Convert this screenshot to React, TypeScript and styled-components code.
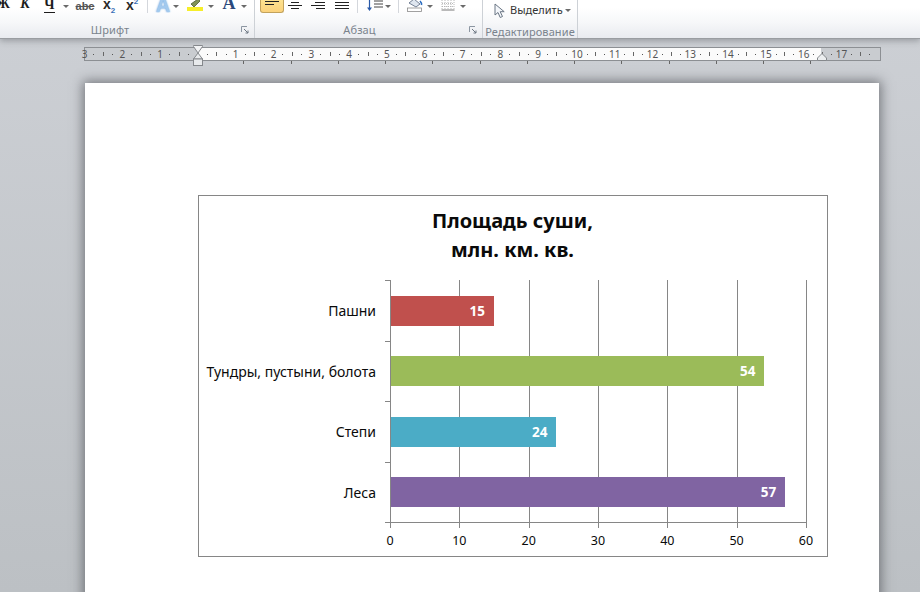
import React from "react";
import styled, { createGlobalStyle } from "styled-components";

const GlobalStyle = createGlobalStyle`
  html, body {
    margin: 0;
    padding: 0;
    height: 100%;
    overflow: hidden;
  }
  body {
    font-family: "Noto Sans", "Liberation Sans", sans-serif;
  }
`;

const landData = [
  { label: "Пашни", value: 15, color: "#c0504d" },
  { label: "Тундры, пустыни, болота", value: 54, color: "#9bbb59" },
  { label: "Степи", value: 24, color: "#4bacc6" },
  { label: "Леса", value: 57, color: "#8064a2" },
];

const rulerNumbers = [3, 2, 1, 0, 1, 2, 3, 4, 5, 6, 7, 8, 9, 10, 11, 12, 13, 14, 15, 16, 17];
const tabStops = Array.from({ length: 13 }, (_, i) => i);
const axisValues = [0, 10, 20, 30, 40, 50, 60];

function App() {
  return (
    <Window>
      <GlobalStyle />

      {/* ribbon, cut off at the top */}
      <Ribbon>
        <FontGroup>
          <Controls>
            <Tool $w={22}><BoldLetter>Ж</BoldLetter></Tool>
            <Tool $w={22}><ItalicLetter>К</ItalicLetter></Tool>
            <Tool $w={27}><UnderLetter>Ч</UnderLetter></Tool>
            <Tool $w={6}><Caret /></Tool>
            <Tool $w={32}><StrikeText>abc</StrikeText></Tool>
            <Tool $w={16}><ScriptLetter>x<sub>2</sub></ScriptLetter></Tool>
            <Tool $w={30}><ScriptLetter>x<sup>2</sup></ScriptLetter></Tool>
            <Divider />
            <Tool $w={20} $ml={5}><GlowLetter>A</GlowLetter></Tool>
            <Tool $w={6}><Caret /></Tool>
            <Tool $w={24} $ml={4}>
              <svg width="18" height="13" viewBox="0 0 18 13">
                <rect x="1" y="7" width="16" height="4" fill="#f6ee2a" />
                <path d="M5 4l3 3 6-6-2-2z" fill="#7f9156" stroke="#4a5a32" strokeWidth="0.8" />
              </svg>
            </Tool>
            <Tool $w={6} $ml={1}><Caret /></Tool>
            <Tool $w={24} $ml={3}><FontColorLetter>A</FontColorLetter></Tool>
            <Tool $w={6}><Caret /></Tool>
          </Controls>
          <LabelRow>
            <GroupLabel>Шрифт</GroupLabel>
            <Launcher><LauncherIcon /></Launcher>
          </LabelRow>
        </FontGroup>

        <ParagraphGroup>
          <Controls>
            <ActiveButton><AlignIcon lines={[[0, 14], [0, 10], [0, 14], [0, 9]]} /></ActiveButton>
            <Tool $w={22}><AlignIcon lines={[[0, 14], [3, 11], [0, 14], [3, 11]]} /></Tool>
            <Tool $w={24}><AlignIcon lines={[[0, 14], [4, 14], [0, 14], [5, 14]]} /></Tool>
            <Tool $w={24}><AlignIcon lines={[[0, 14], [0, 14], [0, 14], [0, 14]]} /></Tool>
            <Divider $ml={3} />
            <Tool $w={20} $ml={7}>
              <svg width="18" height="13" viewBox="0 0 18 13">
                <path d="M3.5 0v8" stroke="#2a5aa8" strokeWidth="1.2" />
                <path d="M1 7.5h5l-2.5 3.5z" fill="#2a5aa8" />
                <path d="M8 1h9M8 4h9M8 7h9" stroke="#444" strokeWidth="1" />
              </svg>
            </Tool>
            <Tool $w={6}><Caret /></Tool>
            <Divider $ml={7} />
            <Tool $w={24} $ml={4}>
              <svg width="18" height="13" viewBox="0 0 18 13">
                <path d="M3 3l5-4 6 5-4 3z" fill="#dfe6ef" stroke="#55657c" strokeWidth="0.8" />
                <path d="M14 1q2 2 1.500 4" stroke="#2a6cc0" strokeWidth="1.6" fill="none" />
                <rect x="1.5" y="8" width="14" height="3.5" fill="#fff" stroke="#8a8a8a" strokeWidth="0.8" />
              </svg>
            </Tool>
            <Tool $w={6}><Caret /></Tool>
            <Tool $w={24} $ml={3}>
              <svg width="14" height="13" viewBox="0 0 14 13">
                <path d="M1 0v9.5M4 0v9.5M7 0v9.5M10 0v9.5M13 0v9.5M1 3.5h12M1 6.5h12" stroke="#a8a8a8" strokeWidth="0.8" strokeDasharray="1 1" fill="none" />
                <path d="M0.5 10h13" stroke="#777" strokeWidth="1" />
              </svg>
            </Tool>
            <Tool $w={6}><Caret /></Tool>
          </Controls>
          <LabelRow>
            <GroupLabel>Абзац</GroupLabel>
            <Launcher><LauncherIcon /></Launcher>
          </LabelRow>
        </ParagraphGroup>

        <EditGroup>
          <SelectButton>
            <svg width="14" height="16" viewBox="0 0 14 16">
              <path d="M2 1v11l3-2.5 2.200 5 2.300-1-2.300-4.800h4z" fill="#f4f7fb" stroke="#6a7684" strokeWidth="1" strokeLinejoin="round" />
            </svg>
            <SelectText>Выделить</SelectText>
            <SelectCaret />
          </SelectButton>
          <LabelRow>
            <GroupLabel>Редактирование</GroupLabel>
          </LabelRow>
        </EditGroup>
      </Ribbon>

      {/* ruler */}
      <RulerBlock>
        <RulerTrack>
          {rulerNumbers.map((n, i) => (
            <RulerCell key={i}>
              <RulerNumber>{n === 0 ? "" : n}</RulerNumber>
              <RulerDot />
              <RulerLine />
              <RulerDot />
            </RulerCell>
          ))}
          <LeftIndent width="10" height="21" viewBox="0 0 10 21">
            <path d="M.5.5h9v1L5 8 .5 1.5z" fill="#f2f3f5" stroke="#85888c" />
            <path d="M5 8l4.500 6H.5z" fill="#e8eaec" stroke="#85888c" />
            <rect x=".5" y="14" width="9" height="6.500" fill="#e8eaec" stroke="#85888c" />
          </LeftIndent>
          <RightIndent width="10" height="8" viewBox="0 0 10 8">
            <path d="M.5 7.500V5L5 .5 9.500 5v2.500z" fill="#eceeef" stroke="#85888c" />
          </RightIndent>
        </RulerTrack>
        <TabStops>
          {tabStops.map((t) => (
            <TabStop key={t} />
          ))}
        </TabStops>
      </RulerBlock>

      {/* document page */}
      <Paper>
        <Chart>
          <ChartTitle>
            Площадь суши,
            <br />
            млн. км. кв.
          </ChartTitle>

          <PlotRows>
            {landData.map((item) => (
              <PlotRow key={item.label}>
                <CategoryLabel>{item.label}</CategoryLabel>
                <CategoryTick />
                <BarTrack>
                  <Bar $color={item.color} style={{ width: (item.value * 416) / 60 - 1 }}>
                    {item.value}
                  </Bar>
                </BarTrack>
              </PlotRow>
            ))}
          </PlotRows>
          <AxisLine />
          <AxisLabels>
            {axisValues.map((v) => (
              <AxisLabel key={v}>{v}</AxisLabel>
            ))}
          </AxisLabels>
        </Chart>
      </Paper>
    </Window>
  );
}

function AlignIcon({ lines }: { lines: number[][] }) {
  return (
    <svg width="14" height="13" viewBox="0 0 14 13">
      {lines.map((l, i) => (
        <path key={i} d={`M${l[0]} ${i * 3 - 0.5}H${l[1]}`} stroke="#222" strokeWidth="1" />
      ))}
    </svg>
  );
}

function LauncherIcon() {
  return (
    <svg width="8" height="8" viewBox="0 0 8 8">
      <path d="M.5 6V.5H6" stroke="#8c96a2" fill="none" />
      <path d="M3 3l4 4M7 4.500V7H4.500" stroke="#6c7682" fill="none" />
    </svg>
  );
}

/////window//////
const Window = styled.div`
  width: 920px;
  height: 592px;
  overflow: hidden;
  background: linear-gradient(#cdd0d5, #bcc0c4);
`;

/////ribbon//////
const Ribbon = styled.header`
  height: 39px;
  box-sizing: border-box;
  display: flex;
  background: linear-gradient(#ffffff 20%, #f6f7f9 60%, #e9ebef);
  border-bottom: 1px solid #9a9da1;
  box-shadow: 0 2px 6px rgba(90, 95, 100, 0.45);
`;

const RibbonGroup = styled.section<{ $w: number }>`
  width: ${(p) => p.$w}px;
  flex: none;
  box-sizing: border-box;
  border-right: 1px solid #cdd1d6;
  display: flex;
  flex-direction: column;
`;

const FontGroup = styled(RibbonGroup).attrs({ $w: 271 })`
  margin-left: -16px;
`;

const ParagraphGroup = styled(RibbonGroup).attrs({ $w: 228 })``;

const EditGroup = styled(RibbonGroup).attrs({ $w: 95 })``;

const Controls = styled.div`
  height: 13px;
  display: flex;
  align-items: flex-end;
  overflow: hidden;
  padding-left: 8px;
  ${ParagraphGroup} & {
    padding-left: 5px;
  }
`;

const Tool = styled.div<{ $w: number; $ml?: number }>`
  width: ${(p) => p.$w}px;
  margin-left: ${(p) => p.$ml || 0}px;
  flex: none;
  height: 13px;
  display: flex;
  align-items: flex-end;
  justify-content: center;
`;

const Divider = styled.div<{ $ml?: number }>`
  width: 1px;
  height: 13px;
  flex: none;
  margin-left: ${(p) => p.$ml || 0}px;
  background: #d4d7dc;
`;

const Caret = styled.span`
  width: 0;
  height: 0;
  margin-bottom: 5px;
  border-left: 3px solid transparent;
  border-right: 3px solid transparent;
  border-top: 3px solid #6a6a6a;
`;

const SelectCaret = styled(Caret)`
  margin: 6px 0 0 0;
`;

const ActiveButton = styled.div`
  width: 24px;
  height: 13px;
  box-sizing: border-box;
  flex: none;
  display: flex;
  align-items: flex-end;
  justify-content: center;
  padding-bottom: 3px;
  background: linear-gradient(#fde28f, #fbd27c);
  border: 1px solid #c2a25c;
  border-top: none;
  border-radius: 0 0 3px 3px;
`;

const BoldLetter = styled.span`
  font: bold 14px/13px "Liberation Serif", serif;
  color: #1c1c1c;
  padding-bottom: 3px;
`;

const ItalicLetter = styled(BoldLetter)`
  font-style: italic;
`;

const UnderLetter = styled(BoldLetter)`
  padding-bottom: 3px;
  line-height: 9px;
  border-bottom: 1px solid #1c1c1c;
`;

const StrikeText = styled.span`
  font: bold 11px/12px "Liberation Sans", sans-serif;
  color: #555;
  text-decoration: line-through;
  padding-bottom: 1px;
`;

const ScriptLetter = styled.span`
  font: bold 14px/12px "Liberation Sans", sans-serif;
  color: #2a2a2a;
  padding-bottom: 2px;
  sub,
  sup {
    font-size: 8px;
    line-height: 0;
    color: #3a70b8;
  }
`;

const GlowLetter = styled.span`
  font: bold 20px/13px "Liberation Sans", sans-serif;
  color: #a2c9ee;
  text-shadow: 0 0 2px #5a9adb;
  padding-bottom: 1px;
`;

const FontColorLetter = styled.span`
  font: bold 18px/13px "Liberation Serif", serif;
  color: #2c4a7c;
  padding-bottom: 3px;
`;

const LabelRow = styled.div`
  height: 25px;
  padding-top: 8px;
  box-sizing: border-box;
  display: flex;
  align-items: center;
`;

const GroupLabel = styled.span`
  flex: 1;
  text-align: center;
  font-size: 11px;
  letter-spacing: 0.1px;
  color: #7a838d;
  white-space: nowrap;
`;

const Launcher = styled.span`
  width: 18px;
  flex: none;
  display: flex;
  padding-left: 5px;
  box-sizing: border-box;
`;

const SelectButton = styled.div`
  height: 13px;
  display: flex;
  align-items: flex-start;
  padding-left: 10px;
  padding-top: 3px;
`;

const SelectText = styled.span`
  margin-left: 3px;
  margin-right: 2px;
  font-size: 11px;
  line-height: 14px;
  color: #333;
`;

/////ruler//////
const RulerBlock = styled.div`
  margin: 8px 0 0 84px;
  width: 797px;
`;

const RulerTrack = styled.div`
  position: relative;
  height: 14px;
  box-sizing: border-box;
  display: flex;
  align-items: center;
  border: 1px solid #8c8f93;
  background: linear-gradient(
    to right,
    #c9ccd0 112px,
    #fbfbfb 112px,
    #fbfbfb 736px,
    #c9ccd0 736px
  );
`;

const RulerCell = styled.div`
  flex: none;
  width: 37.8px;
  display: grid;
  grid-template-columns: repeat(4, 1fr);
  align-items: center;
  justify-items: center;
  &:first-child {
    margin-left: -5.2px;
  }
`;

const RulerNumber = styled.span`
  font-size: 10px;
  line-height: 12px;
  color: #555;
  white-space: nowrap;
`;

const RulerDot = styled.i`
  width: 1px;
  height: 1px;
  background: #555;
`;

const RulerLine = styled.i`
  width: 1px;
  height: 4px;
  background: #666;
`;

const LeftIndent = styled.svg`
  position: absolute;
  left: 108px;
  top: -3px;
`;

const RightIndent = styled.svg`
  position: absolute;
  left: 732px;
  bottom: -1px;
`;

const TabStops = styled.div`
  display: flex;
  margin-left: 113px;
`;

const TabStop = styled.span`
  width: 47.25px;
  height: 3px;
  box-sizing: border-box;
  flex: none;
  border-right: 1px solid #666;
`;

/////page//////
const Paper = styled.main`
  margin: 19px 0 0 85px;
  width: 794px;
  height: 600px;
  box-sizing: border-box;
  padding: 112px 0 0 113px;
  background: #fff;
  box-shadow: 0 0 11px 2px rgba(60, 62, 66, 0.6);
`;

/////chart//////
const Chart = styled.figure`
  margin: 0;
  width: 630px;
  height: 362px;
  box-sizing: border-box;
  border: 1px solid #868686;
  padding-top: 10px;
  color: #0a0a0a;
`;

const ChartTitle = styled.figcaption`
  font-size: 20px;
  font-weight: 700;
  line-height: 29px;
  text-align: center;
  margin-bottom: 16.3px;
  padding-right: 1px;
`;

const PlotRows = styled.div`
  display: flex;
  flex-direction: column;
`;

const PlotRow = styled.div`
  height: 60.5px;
  display: grid;
  grid-template-columns: 186px 5px 417px;
`;

const CategoryLabel = styled.span`
  align-self: center;
  text-align: right;
  padding-right: 9px;
  font-size: 14px;
  white-space: nowrap;
`;

const CategoryTick = styled.span`
  border-top: 1px solid #868686;
`;

const BarTrack = styled.div`
  display: flex;
  align-items: center;
  padding-left: 1px;
  background: repeating-linear-gradient(
    to right,
    #868686 0,
    #868686 1px,
    transparent 1px,
    transparent 69.33px
  );
`;

const Bar = styled.div<{ $color: string }>`
  height: 30px;
  box-sizing: border-box;
  padding-right: 9px;
  display: flex;
  align-items: center;
  justify-content: flex-end;
  background: ${(p) => p.$color};
  color: #fff;
  font-size: 13.5px;
  font-weight: 700;
`;

const AxisLine = styled.div`
  margin-left: 186px;
  width: 417px;
  height: 5px;
  border-top: 1px solid #868686;
  padding-left: 5px;
  background: repeating-linear-gradient(
      to right,
      #868686 0,
      #868686 1px,
      transparent 1px,
      transparent 69.33px
    )
    5px 0 / 417px 100% no-repeat;
`;

const AxisLabels = styled.div`
  display: flex;
  margin: 4px 0 0 156.33px;
`;

const AxisLabel = styled.span`
  flex: none;
  width: 69.33px;
  text-align: center;
  font-size: 12.5px;
  line-height: 17px;
`;

export default App;
